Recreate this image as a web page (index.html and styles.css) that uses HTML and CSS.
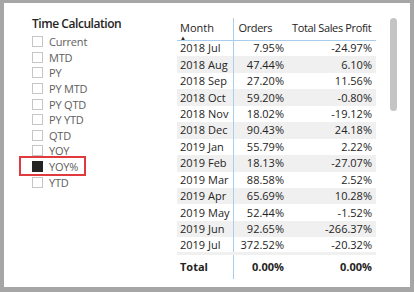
FILE: index.html
```html
<!DOCTYPE html>
<html>
<head>
    <meta charset="UTF-8">
    <title>Time Calculation</title>
    <link rel="stylesheet" href="styles.css">
</head>
<body>

<div class="painel">

    <div class="slicer">
        <div class="slicer-titulo">Time Calculation</div>
        <div class="item"><span class="caixa"></span>Current</div>
        <div class="item"><span class="caixa"></span>MTD</div>
        <div class="item"><span class="caixa"></span>PY</div>
        <div class="item"><span class="caixa"></span>PY MTD</div>
        <div class="item"><span class="caixa"></span>PY QTD</div>
        <div class="item"><span class="caixa"></span>PY YTD</div>
        <div class="item"><span class="caixa"></span>QTD</div>
        <div class="item"><span class="caixa"></span>YOY</div>
        <div class="item selecionado"><span class="caixa marcada"></span>YOY%</div>
        <div class="item"><span class="caixa"></span>YTD</div>
    </div>

    <div class="tabela-section">
        <table id="tabelaMeses">
            <thead>
                <tr>
                    <th class="col-mes">Month<span class="seta">&#9650;</span></th>
                    <th class="col-orders">Orders</th>
                    <th class="col-lucro">Total Sales Profit</th>
                </tr>
            </thead>
            <tbody>
                <tr><td class="col-mes">2018 Jul</td><td>7.95%</td><td>-24.97%</td></tr>
                <tr><td class="col-mes">2018 Aug</td><td>47.44%</td><td>6.10%</td></tr>
                <tr><td class="col-mes">2018 Sep</td><td>27.20%</td><td>11.56%</td></tr>
                <tr><td class="col-mes">2018 Oct</td><td>59.20%</td><td>-0.80%</td></tr>
                <tr><td class="col-mes">2018 Nov</td><td>18.02%</td><td>-19.12%</td></tr>
                <tr><td class="col-mes">2018 Dec</td><td>90.43%</td><td>24.18%</td></tr>
                <tr><td class="col-mes">2019 Jan</td><td>55.79%</td><td>2.22%</td></tr>
                <tr><td class="col-mes">2019 Feb</td><td>18.13%</td><td>-27.07%</td></tr>
                <tr><td class="col-mes">2019 Mar</td><td>88.58%</td><td>2.52%</td></tr>
                <tr><td class="col-mes">2019 Apr</td><td>65.69%</td><td>10.28%</td></tr>
                <tr><td class="col-mes">2019 May</td><td>52.44%</td><td>-1.52%</td></tr>
                <tr><td class="col-mes">2019 Jun</td><td>92.65%</td><td>-266.37%</td></tr>
                <tr><td class="col-mes">2019 Jul</td><td>372.52%</td><td>-20.32%</td></tr>
            </tbody>
            <tfoot>
                <tr><td class="col-mes">Total</td><td>0.00%</td><td>0.00%</td></tr>
            </tfoot>
        </table>
    </div>

    <div class="rolagem"></div>

</div>

</body>
</html>
```

FILE: styles.css
```css
body {
    margin: 0;
    background-color: #a6a6a6;
    font-family: "Open Sans", "Noto Sans", sans-serif;
    color: #252423;
}

.painel {
    display: flex;
    align-items: flex-start;
    margin: 3px 4px 5px 4px;
    height: 284px;
    background-color: #ffffff;
}

.slicer {
    width: 145px;
    padding: 12px 0 0 28px;
}

.slicer-titulo {
    font-size: 12px;
    font-weight: 600;
    height: 18px;
    line-height: 18px;
    margin-bottom: 1px;
    letter-spacing: -0.45px;
}

.item {
    display: flex;
    align-items: center;
    height: 15.6px;
    font-size: 11px;
    color: #605e5c;
    letter-spacing: -0.2px;
}

.item.selecionado {
    position: relative;
}

/* contorno vermelho em volta do item marcado */
.item.selecionado::after {
    content: "";
    position: absolute;
    left: -13px;
    top: -3px;
    width: 63px;
    height: 16px;
    border: 2px solid #e0393e;
}

.caixa {
    width: 9px;
    height: 9px;
    border: 1px solid #c8c6c4;
    margin-right: 6px;
    flex-shrink: 0;
}

.caixa.marcada {
    background-color: #252423;
    border-color: #252423;
}

.tabela-section {
    padding-top: 15px;
}

#tabelaMeses {
    border-collapse: collapse;
    table-layout: fixed;
    width: 199px;
    font-size: 11px;
}

#tabelaMeses th, #tabelaMeses td {
    box-sizing: border-box;
}

#tabelaMeses th {
    font-weight: normal;
    color: #252423;
    height: 22px;
    padding: 2px 0 0 5px;
    text-align: left;
    vertical-align: top;
    border-bottom: 1px solid #a9cdec;
    white-space: nowrap;
    letter-spacing: -0.35px;
}

#tabelaMeses th.col-mes {
    position: relative;
    padding-left: 3px;
    letter-spacing: 0;
}

.seta {
    position: absolute;
    left: 3px;
    top: 17px;
    font-size: 6px;
    line-height: 6px;
}

#tabelaMeses .col-mes {
    width: 56px;
}

#tabelaMeses .col-orders {
    width: 55px;
}

#tabelaMeses .col-lucro {
    width: 88px;
    padding-left: 4px;
}

#tabelaMeses td {
    height: 16.45px;
    padding: 0 4px 0 0;
    text-align: right;
    white-space: nowrap;
    line-height: 14px;
}

#tabelaMeses td.col-mes {
    text-align: left;
    padding-left: 3px;
}

#tabelaMeses .col-mes {
    border-right: 1px solid #a9cdec;
}

#tabelaMeses tbody tr:nth-child(even) td {
    background-color: #f0f0f0;
}

#tabelaMeses tfoot td {
    font-weight: bold;
    height: 25px;
    border-top: 3px solid #f0f0f0;
}

.rolagem {
    width: 7px;
    height: 93px;
    margin: 15px 0 0 14px;
    border-radius: 4px;
    background-color: #c4c4c4;
}
```
